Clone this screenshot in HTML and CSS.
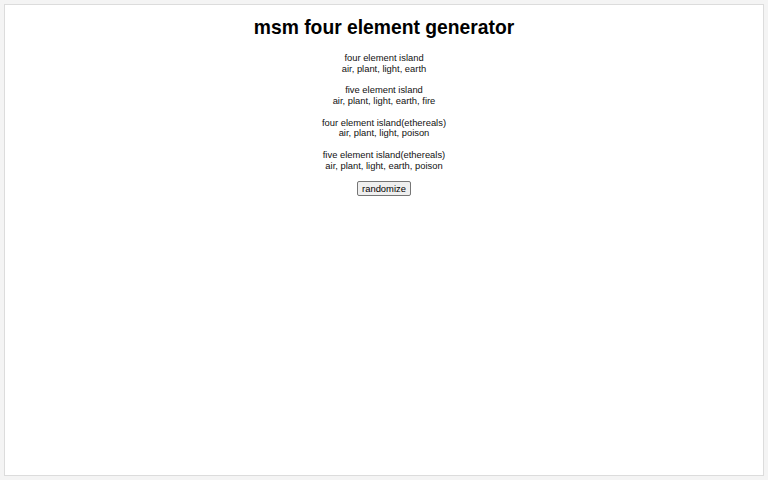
FILE: index.html
```html
<!DOCTYPE html>
<html>
<head>
<meta charset="utf-8">
<link rel="stylesheet" href="styles.css">
</head>
<body>
<div class="frame">
  <h1 class="title">msm four element generator</h1>
  <div class="list">
    <p class="item">four element island<br>air, plant, light, earth</p>
    <p class="item">five element island<br>air, plant, light, earth, fire</p>
    <p class="item">four element island(ethereals)<br>air, plant, light, poison</p>
    <p class="item">five element island(ethereals)<br>air, plant, light, earth, poison</p>
  </div>
  <button class="btn">randomize</button>
</div>
</body>
</html>
```
FILE: styles.css
```css
html, body {
  margin: 0;
  padding: 0;
  background: #f4f4f4;
}
body {
  padding: 4px;
  height: 480px;
  box-sizing: border-box;
}
.frame {
  box-sizing: border-box;
  height: 472px;
  background: #fff;
  border: 1px solid #dcdcdc;
  font-family: "Liberation Sans", Arial, sans-serif;
  color: #000;
  text-align: center;
  display: flex;
  flex-direction: column;
  align-items: center;
}
.title {
  font-size: 19.3px;
  font-weight: bold;
  margin: 12px 0 0;
  line-height: 22px;
}
.list {
  margin-top: 14px;
  font-size: 9.4px;
  line-height: 10.75px;
  color: #111;
}
.item {
  margin: 0 0 10.75px;
}
.btn {
  font-family: "Liberation Sans", Arial, sans-serif;
  font-size: 9.4px;
  line-height: 11px;
  padding: 1px 4px;
  margin-top: -1px;
  background: #efefef;
  border: 1px solid #767676;
  border-radius: 2px;
  color: #000;
}
```
